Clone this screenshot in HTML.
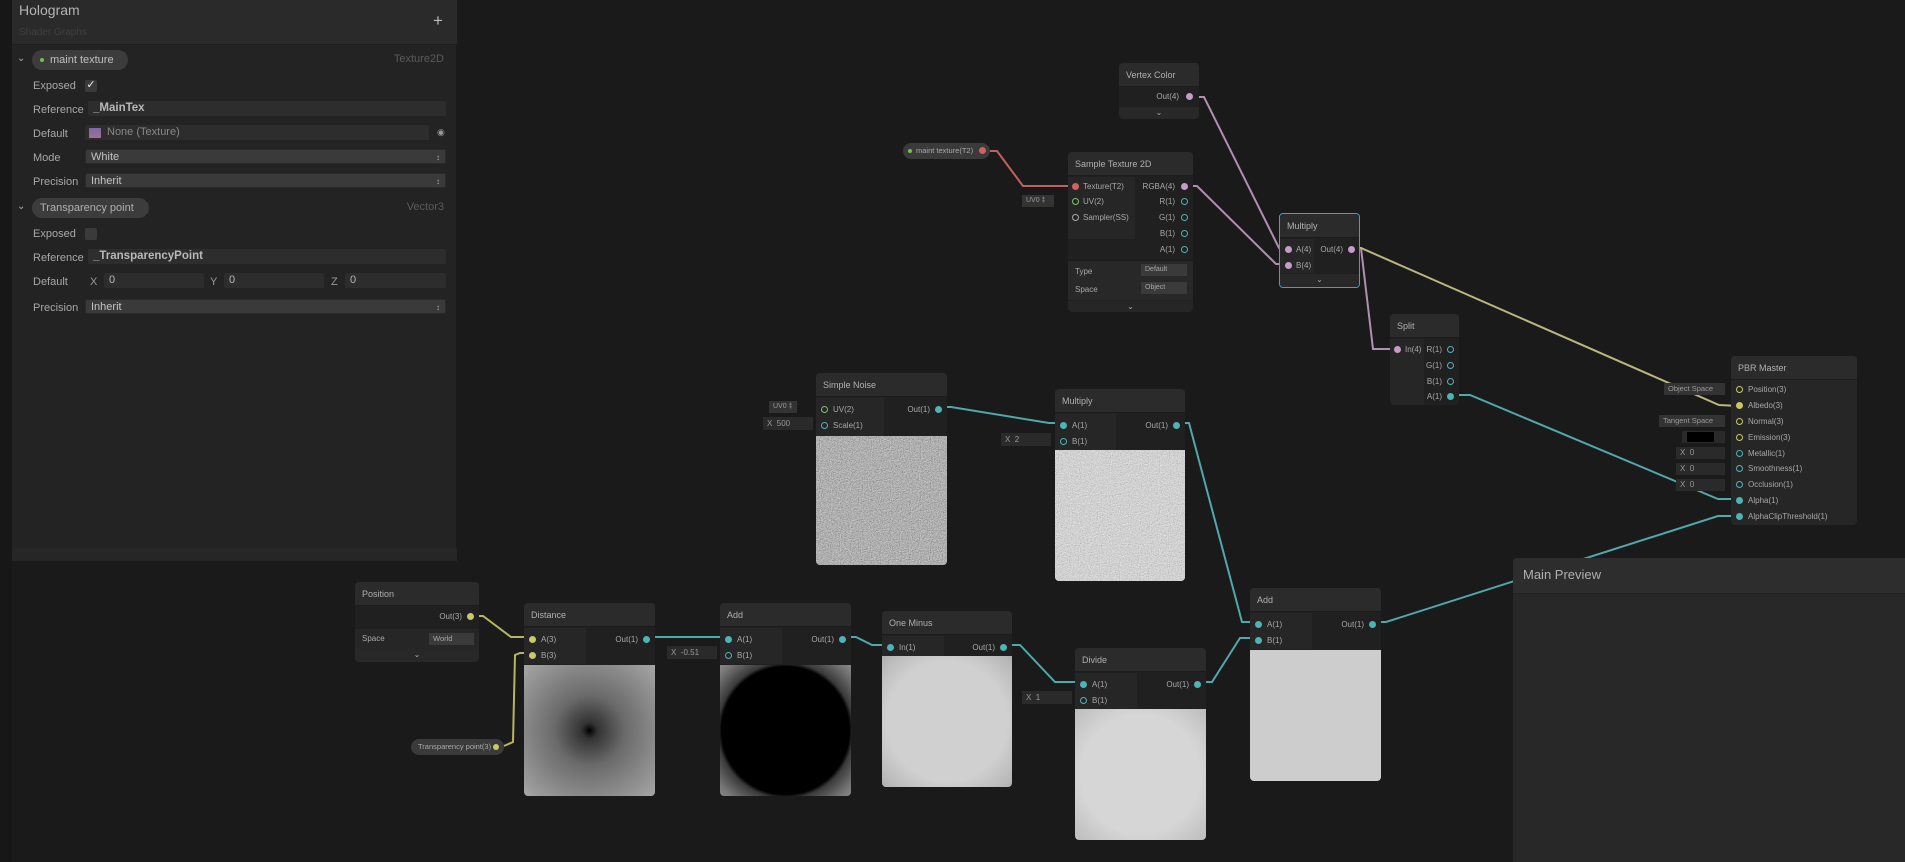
<!DOCTYPE html>
<html><head><meta charset="utf-8"><style>
*{box-sizing:border-box;margin:0;padding:0}
body{width:1905px;height:862px;background:#1a1a1a;overflow:hidden;position:relative;font-family:"Liberation Sans","DejaVu Sans",sans-serif;color:#b4b4b4}
.a{position:absolute}
.node{position:absolute;background:#202020;border-radius:4px;overflow:hidden;font-size:8px;color:#a8a8a8}
.hd{position:absolute;left:0;right:0;top:0;height:24px;background:#2b2b2b;border-bottom:1px solid #1c1c1c;font-size:9px;line-height:24px;padding-left:7px;color:#b0b0b0}
.inc{position:absolute;left:0;background:#262626}
.pl{position:absolute;white-space:nowrap;line-height:10px}
.dot{position:absolute;width:7px;height:7px;border-radius:50%;border:1.5px solid #4fb3b5}
.f{background:#4fb3b5}
.pv{position:absolute;left:0;right:0;bottom:0}
.fld{position:absolute;background:#2a2a2a;font-size:8px;color:#9a9a9a;line-height:14px;height:14px;padding-left:4px;white-space:nowrap}
.lp .row{position:absolute;left:21px;font-size:11px;color:#a8a8a8}
.inp{position:absolute;background:#2d2d2d;height:15px;border-radius:2px;font-size:11px;line-height:15px;padding-left:5px;color:#b8b8b8}
.sel{position:absolute;background:#3a3a3a;height:15px;border-radius:2px;font-size:11px;line-height:15px;padding-left:5px;color:#c4c4c4;border:1px solid #2a2a2a}
.sel:after{content:"\2195";position:absolute;right:5px;top:0;font-size:8px;color:#aaa}
</style></head><body>

<svg class="a" style="left:0;top:0" width="1905" height="862">
<defs><filter id="n" x="0" y="0" width="100%" height="100%"><feTurbulence type="fractalNoise" baseFrequency="0.9" numOctaves="2" seed="3"/><feColorMatrix type="saturate" values="0"/><feComponentTransfer><feFuncR type="linear" slope="1.5" intercept="-0.2"/><feFuncG type="linear" slope="1.5" intercept="-0.2"/><feFuncB type="linear" slope="1.5" intercept="-0.2"/><feFuncA type="linear" slope="0" intercept="1"/></feComponentTransfer></filter></defs>
<g fill="none" stroke-width="2">
<polyline stroke="#b08fb0" points="1192,97 1204,97 1279,248 1290,248"/>
<polyline stroke="#c4605c" points="990,151 997,151 1023,186 1075,186"/>
<polyline stroke="#b08fb0" points="1185,186 1197,186 1276,264 1290,264"/>
<polyline stroke="#b08fb0" points="1349,248 1361,248 1373,349 1397,349"/>
<polyline stroke="#b9b67e" points="1349,248 1361,248 1719,405 1739,406"/>
<polyline stroke="#4fa8aa" points="1452,395 1470,395 1718,499 1739,499"/>
<polyline stroke="#4fa8aa" points="939,407 951,407 1049,423 1062,423"/>
<polyline stroke="#4fa8aa" points="1177,423 1189,423 1242,622 1257,622"/>
<polyline stroke="#b5b660" points="471,616 483,616 511,637 531,637"/>
<polyline stroke="#b5b660" points="504,746 513,742 515,655 520,653 531,653"/>
<polyline stroke="#4fa8aa" points="648,637 728,637"/>
<polyline stroke="#4fa8aa" points="844,637 856,637 872,645 889,645"/>
<polyline stroke="#4fa8aa" points="1005,645 1020,645 1055,682 1083,682"/>
<polyline stroke="#4fa8aa" points="1199,682 1212,682 1240,638 1257,638"/>
<polyline stroke="#4fa8aa" points="1373,622 1386,622 1718,516 1739,516"/>
</g></svg>

<!-- Left panel -->
<div class="a" style="left:0;top:0;width:12px;height:862px;background:#171717"></div>
<div class="a lp" style="left:12px;top:0;width:445px;height:561px;background:#232323;border-right:1px solid #1a1a1a">
 <div class="a" style="left:0;top:0;width:445px;height:45px;background:#2a2a2a;border-bottom:1px solid #1e1e1e"></div>
 <div class="a" style="left:7px;top:2px;font-size:14px;color:#b4b4b4">Hologram</div>
 <div class="a" style="left:7px;top:27px;font-size:10px;color:#3f3f3f">Shader Graphs</div>
 <div class="a" style="left:421px;top:11px;font-size:17px;color:#bbb">+</div>
 <div class="a" style="left:5px;top:53px;font-size:10px;color:#aaa">&#8964;</div>
 <div class="a" style="left:20px;top:50px;width:96px;height:20px;border-radius:10px;background:#3c3c3c;font-size:11px;line-height:20px;padding-left:18px;color:#c0c0c0">maint texture<span class="a" style="left:8px;top:8px;width:4px;height:4px;border-radius:50%;background:#6ec24a"></span></div>
 <div class="a" style="right:12px;top:53px;font-size:11px;color:#5a5a5a">Texture2D</div>
 <div class="row" style="top:80px">Exposed</div>
 <div class="a" style="left:73px;top:80px;width:12px;height:12px;background:#3a3a3a;border-radius:2px;color:#eee;font-size:11px;line-height:11px;text-align:center">&#10003;</div>
 <div class="row" style="top:104px">Reference</div>
 <div class="inp" style="left:76px;top:101px;width:358px;font-weight:bold;font-size:11.5px">_MainTex</div>
 <div class="row" style="top:128px">Default</div>
 <div class="inp" style="left:73px;top:125px;width:344px;color:#888;padding-left:22px">None (Texture)<span class="a" style="left:4px;top:3px;width:12px;height:10px;background:linear-gradient(#7a6aa8,#a07090)"></span></div>
 <div class="a" style="left:425px;top:127px;font-size:9px;color:#999">&#9673;</div>
 <div class="row" style="top:152px">Mode</div>
 <div class="sel" style="left:73px;top:149px;width:361px">White</div>
 <div class="row" style="top:176px">Precision</div>
 <div class="sel" style="left:73px;top:173px;width:361px">Inherit</div>
 <div class="a" style="left:5px;top:201px;font-size:10px;color:#aaa">&#8964;</div>
 <div class="a" style="left:20px;top:198px;width:117px;height:20px;border-radius:10px;background:#3c3c3c;font-size:11px;line-height:20px;padding-left:8px;color:#b0b0b0">Transparency point</div>
 <div class="a" style="right:12px;top:201px;font-size:11px;color:#5a5a5a">Vector3</div>
 <div class="row" style="top:228px">Exposed</div>
 <div class="a" style="left:73px;top:228px;width:12px;height:12px;background:#3a3a3a;border-radius:2px"></div>
 <div class="row" style="top:252px">Reference</div>
 <div class="inp" style="left:76px;top:249px;width:358px;font-weight:bold;font-size:11.5px">_TransparencyPoint</div>
 <div class="row" style="top:276px">Default</div>
 <div class="a" style="left:78px;top:276px;font-size:11px;color:#999">X</div>
 <div class="inp" style="left:92px;top:273px;width:100px">0</div>
 <div class="a" style="left:198px;top:276px;font-size:11px;color:#999">Y</div>
 <div class="inp" style="left:212px;top:273px;width:100px">0</div>
 <div class="a" style="left:319px;top:276px;font-size:11px;color:#999">Z</div>
 <div class="inp" style="left:333px;top:273px;width:101px">0</div>
 <div class="row" style="top:302px">Precision</div>
 <div class="sel" style="left:73px;top:299px;width:361px">Inherit</div>
 <div class="a" style="left:0;top:548px;width:445px;height:13px;background:#262626"></div>
</div>

<!-- Vertex Color -->
<div class="node" style="left:1119px;top:63px;width:80px;height:56px">
 <div class="hd">Vertex Color</div>
 <div class="pl" style="right:20px;top:29px">Out(4)</div><div class="dot f" style="right:6px;top:30px;border-color:#c59cc5;background:#c59cc5"></div>
 <div class="a" style="left:0;right:0;top:44px;height:12px;background:#282828;text-align:center;font-size:8px;line-height:12px">&#8964;</div>
</div>

<!-- maint texture pill -->
<div class="a" style="left:903px;top:143px;width:87px;height:16px;border-radius:8px;background:#3a3a3a;font-size:7.5px;line-height:16px;padding-left:13px;color:#aaa;white-space:nowrap">maint texture(T2)<span class="a" style="left:5px;top:6px;width:4px;height:4px;border-radius:50%;background:#6ec24a"></span><span class="a" style="left:76px;top:4px;width:7px;height:7px;border-radius:50%;background:#d06060"></span></div>

<!-- Sample Texture 2D -->
<div class="node" style="left:1068px;top:152px;width:125px;height:160px">
 <div class="hd">Sample Texture 2D</div>
 <div class="inc" style="top:25px;width:67px;height:62px"></div>
 <div class="dot f" style="left:4px;top:31px;border-color:#d06060;background:#d06060"></div><div class="pl" style="left:15px;top:30px">Texture(T2)</div>
 <div class="dot" style="left:4px;top:46px;border-color:#7ec46a"></div><div class="pl" style="left:15px;top:45px">UV(2)</div>
 <div class="dot" style="left:4px;top:62px;border-color:#aaa"></div><div class="pl" style="left:15px;top:61px">Sampler(SS)</div>
 <div class="pl" style="right:18px;top:30px">RGBA(4)</div><div class="dot f" style="right:5px;top:31px;border-color:#c59cc5;background:#c59cc5"></div>
 <div class="pl" style="right:18px;top:45px">R(1)</div><div class="dot" style="right:5px;top:46px"></div>
 <div class="pl" style="right:18px;top:61px">G(1)</div><div class="dot" style="right:5px;top:62px"></div>
 <div class="pl" style="right:18px;top:77px">B(1)</div><div class="dot" style="right:5px;top:78px"></div>
 <div class="pl" style="right:18px;top:93px">A(1)</div><div class="dot" style="right:5px;top:94px"></div>
 <div class="a" style="left:0;right:0;top:108px;height:40px;background:#282828;border-top:1px solid #1c1c1c"></div>
 <div class="pl" style="left:7px;top:115px">Type</div><div class="a" style="left:73px;top:112px;width:46px;height:12px;background:#3a3a3a;font-size:7px;line-height:12px;padding-left:4px">Default</div>
 <div class="pl" style="left:7px;top:133px">Space</div><div class="a" style="left:73px;top:130px;width:46px;height:12px;background:#3a3a3a;font-size:7px;line-height:12px;padding-left:4px">Object</div>
 <div class="a" style="left:0;right:0;top:149px;height:11px;background:#262626;text-align:center;font-size:8px;line-height:11px">&#8964;</div>
</div>
<div class="fld" style="left:1022px;top:195px;width:32px;height:12px;line-height:12px;background:#333;font-size:7px">UV0 ‡</div>

<!-- Multiply selected -->
<div class="node" style="left:1279px;top:213px;width:81px;height:75px;border:1.5px solid #3d9ed8">
 <div class="hd">Multiply</div>
 <div class="inc" style="top:25px;width:34px;height:34px"></div>
 <div class="dot f" style="left:5px;top:32px;border-color:#c59cc5;background:#c59cc5"></div><div class="pl" style="left:16px;top:31px">A(4)</div>
 <div class="dot f" style="left:5px;top:48px;border-color:#c59cc5;background:#c59cc5"></div><div class="pl" style="left:16px;top:47px">B(4)</div>
 <div class="pl" style="right:16px;top:31px">Out(4)</div><div class="dot f" style="right:4px;top:32px;border-color:#c59cc5;background:#c59cc5"></div>
 <div class="a" style="left:0;right:0;top:60px;height:13px;background:#282828;text-align:center;font-size:8px;line-height:12px">&#8964;</div>
</div>

<!-- Split -->
<div class="node" style="left:1390px;top:314px;width:69px;height:91px">
 <div class="hd">Split</div>
 <div class="inc" style="top:25px;width:34px;height:66px"></div>
 <div class="dot f" style="left:4px;top:32px;border-color:#c59cc5;background:#c59cc5"></div><div class="pl" style="left:15px;top:31px">In(4)</div>
 <div class="pl" style="right:17px;top:31px">R(1)</div><div class="dot" style="right:5px;top:32px"></div>
 <div class="pl" style="right:17px;top:47px">G(1)</div><div class="dot" style="right:5px;top:48px"></div>
 <div class="pl" style="right:17px;top:63px">B(1)</div><div class="dot" style="right:5px;top:64px"></div>
 <div class="pl" style="right:17px;top:78px">A(1)</div><div class="dot f" style="right:5px;top:79px"></div>
</div>

<!-- PBR Master -->
<div class="node" style="left:1731px;top:356px;width:126px;height:169px;background:#262626">
 <div class="hd">PBR Master</div>
 <div class="dot" style="left:5px;top:30px;border-color:#c8c86a"></div><div class="pl" style="left:17px;top:29px">Position(3)</div>
 <div class="dot f" style="left:5px;top:46px;border-color:#c8c86a;background:#c8c86a"></div><div class="pl" style="left:17px;top:45px">Albedo(3)</div>
 <div class="dot" style="left:5px;top:62px;border-color:#c8c86a"></div><div class="pl" style="left:17px;top:61px">Normal(3)</div>
 <div class="dot" style="left:5px;top:78px;border-color:#c8c86a"></div><div class="pl" style="left:17px;top:77px">Emission(3)</div>
 <div class="dot" style="left:5px;top:94px"></div><div class="pl" style="left:17px;top:93px">Metallic(1)</div>
 <div class="dot" style="left:5px;top:109px"></div><div class="pl" style="left:17px;top:108px">Smoothness(1)</div>
 <div class="dot" style="left:5px;top:125px"></div><div class="pl" style="left:17px;top:124px">Occlusion(1)</div>
 <div class="dot f" style="left:5px;top:141px"></div><div class="pl" style="left:17px;top:140px">Alpha(1)</div>
 <div class="dot f" style="left:5px;top:157px"></div><div class="pl" style="left:17px;top:156px">AlphaClipThreshold(1)</div>
</div>
<div class="fld" style="left:1664px;top:383px;width:61px;height:12px;line-height:12px;font-size:7.5px;background:#333">Object Space</div>
<div class="fld" style="left:1659px;top:415px;width:66px;height:12px;line-height:12px;font-size:7.5px;background:#333">Tangent Space</div>
<div class="fld" style="left:1682px;top:431px;width:43px;height:12px"><span class="a" style="left:5px;top:1px;width:27px;height:10px;background:#000"></span></div>
<div class="fld" style="left:1676px;top:447px;width:49px;height:12px;line-height:12px">X&nbsp;&nbsp;0</div>
<div class="fld" style="left:1676px;top:463px;width:49px;height:12px;line-height:12px">X&nbsp;&nbsp;0</div>
<div class="fld" style="left:1676px;top:479px;width:49px;height:12px;line-height:12px">X&nbsp;&nbsp;0</div>

<!-- Simple Noise -->
<div class="node" style="left:816px;top:373px;width:131px;height:192px">
 <div class="hd">Simple Noise</div>
 <div class="inc" style="top:25px;width:68px;height:38px"></div>
 <div class="dot" style="left:5px;top:33px;border-color:#7ec46a"></div><div class="pl" style="left:17px;top:32px">UV(2)</div>
 <div class="dot" style="left:5px;top:49px"></div><div class="pl" style="left:17px;top:48px">Scale(1)</div>
 <div class="pl" style="right:17px;top:32px">Out(1)</div><div class="dot f" style="right:5px;top:33px"></div>
 <svg class="pv" style="top:63px" width="131" height="129"><rect width="131" height="129" fill="#888" filter="url(#n)"/><rect width="131" height="129" fill="#8a8a8a" opacity="0.35"/></svg>
</div>
<div class="fld" style="left:769px;top:401px;width:28px;height:12px;line-height:12px;font-size:7px;background:#333">UV0 ‡</div>
<div class="fld" style="left:763px;top:417px;width:50px;height:13px;line-height:13px">X&nbsp;&nbsp;500</div>

<!-- Multiply 2 -->
<div class="node" style="left:1055px;top:389px;width:130px;height:192px">
 <div class="hd">Multiply</div>
 <div class="inc" style="top:25px;width:61px;height:36px"></div>
 <div class="dot f" style="left:5px;top:33px"></div><div class="pl" style="left:17px;top:32px">A(1)</div>
 <div class="dot" style="left:5px;top:49px"></div><div class="pl" style="left:17px;top:48px">B(1)</div>
 <div class="pl" style="right:17px;top:32px">Out(1)</div><div class="dot f" style="right:5px;top:33px"></div>
 <svg class="pv" style="top:61px" width="130" height="131"><rect width="130" height="131" fill="#bbb" filter="url(#n)"/><rect width="130" height="131" fill="#ddd" opacity="0.55"/></svg>
</div>
<div class="fld" style="left:1001px;top:433px;width:50px;height:13px;line-height:13px">X&nbsp;&nbsp;2</div>

<!-- Position -->
<div class="node" style="left:355px;top:582px;width:124px;height:80px">
 <div class="hd">Position</div>
 <div class="pl" style="right:17px;top:30px">Out(3)</div><div class="dot f" style="right:5px;top:31px;border-color:#c8c86a;background:#c8c86a"></div>
 <div class="a" style="left:0;right:0;top:47px;height:20px;background:#262626"></div>
 <div class="pl" style="left:7px;top:52px">Space</div><div class="a" style="left:74px;top:51px;width:45px;height:12px;background:#3a3a3a;font-size:7.5px;line-height:12px;padding-left:4px">World</div>
 <div class="a" style="left:0;right:0;top:67px;height:13px;background:#282828;text-align:center;font-size:8px;line-height:12px">&#8964;</div>
</div>

<!-- Transparency point pill -->
<div class="a" style="left:411px;top:739px;width:93px;height:16px;border-radius:8px;background:#3a3a3a;font-size:7.5px;line-height:16px;padding-left:7px;color:#aaa;white-space:nowrap">Transparency point(3)<span class="a" style="left:82px;top:5px;width:6px;height:6px;border-radius:50%;background:#c8c86a"></span></div>

<!-- Distance -->
<div class="node" style="left:524px;top:603px;width:131px;height:193px">
 <div class="hd">Distance</div>
 <div class="inc" style="top:25px;width:62px;height:36px"></div>
 <div class="dot f" style="left:5px;top:33px;border-color:#c8c86a;background:#c8c86a"></div><div class="pl" style="left:17px;top:32px">A(3)</div>
 <div class="dot f" style="left:5px;top:49px;border-color:#c8c86a;background:#c8c86a"></div><div class="pl" style="left:17px;top:48px">B(3)</div>
 <div class="pl" style="right:17px;top:32px">Out(1)</div><div class="dot f" style="right:5px;top:33px"></div>
 <div class="pv" style="top:62px;background:radial-gradient(circle at 50% 50%,#000 0,#333 8px,#6a6a6a 35px,#999 80px,#b0b0b0 100px)"></div>
</div>

<!-- Add 1 -->
<div class="node" style="left:720px;top:603px;width:131px;height:193px">
 <div class="hd">Add</div>
 <div class="inc" style="top:25px;width:62px;height:36px"></div>
 <div class="dot f" style="left:5px;top:33px"></div><div class="pl" style="left:17px;top:32px">A(1)</div>
 <div class="dot" style="left:5px;top:49px"></div><div class="pl" style="left:17px;top:48px">B(1)</div>
 <div class="pl" style="right:17px;top:32px">Out(1)</div><div class="dot f" style="right:5px;top:33px"></div>
 <div class="pv" style="top:62px;background:radial-gradient(circle at 50% 50%,#000 0,#000 64px,#3a3a3a 68px,#777 85px,#999 100px)"></div>
</div>
<div class="fld" style="left:667px;top:646px;width:50px;height:13px;line-height:13px">X&nbsp;&nbsp;-0.51</div>

<!-- One Minus -->
<div class="node" style="left:882px;top:611px;width:130px;height:176px">
 <div class="hd">One Minus</div>
 <div class="inc" style="top:25px;width:62px;height:20px"></div>
 <div class="dot f" style="left:5px;top:33px"></div><div class="pl" style="left:17px;top:32px">In(1)</div>
 <div class="pl" style="right:17px;top:32px">Out(1)</div><div class="dot f" style="right:5px;top:33px"></div>
 <div class="pv" style="top:45px;background:radial-gradient(circle at 50% 50%,#d0d0d0 0,#d0d0d0 60px,#bdbdbd 80px,#a8a8a8 100px)"></div>
</div>

<!-- Divide -->
<div class="node" style="left:1075px;top:648px;width:131px;height:192px">
 <div class="hd">Divide</div>
 <div class="inc" style="top:25px;width:62px;height:36px"></div>
 <div class="dot f" style="left:5px;top:33px"></div><div class="pl" style="left:17px;top:32px">A(1)</div>
 <div class="dot" style="left:5px;top:49px"></div><div class="pl" style="left:17px;top:48px">B(1)</div>
 <div class="pl" style="right:17px;top:32px">Out(1)</div><div class="dot f" style="right:5px;top:33px"></div>
 <div class="pv" style="top:61px;background:radial-gradient(circle at 50% 50%,#d6d6d6 0,#d6d6d6 60px,#c6c6c6 80px,#b8b8b8 100px)"></div>
</div>
<div class="fld" style="left:1022px;top:691px;width:50px;height:13px;line-height:13px">X&nbsp;&nbsp;1</div>

<!-- Add 2 -->
<div class="node" style="left:1250px;top:588px;width:131px;height:193px">
 <div class="hd">Add</div>
 <div class="inc" style="top:25px;width:62px;height:36px"></div>
 <div class="dot f" style="left:5px;top:33px"></div><div class="pl" style="left:17px;top:32px">A(1)</div>
 <div class="dot f" style="left:5px;top:49px"></div><div class="pl" style="left:17px;top:48px">B(1)</div>
 <div class="pl" style="right:17px;top:32px">Out(1)</div><div class="dot f" style="right:5px;top:33px"></div>
 <div class="pv" style="top:62px;background:#cdcdcd"></div>
</div>

<!-- Main Preview -->
<div class="a" style="left:1513px;top:558px;width:392px;height:304px;background:#282828;border-radius:4px 0 0 0">
 <div class="a" style="left:0;top:0;width:392px;height:36px;background:#2d2d2d;border-bottom:1px solid #222;border-radius:4px 0 0 0"></div>
 <div class="a" style="left:10px;top:9px;font-size:13px;color:#b0b0b0">Main Preview</div>
</div>
</body></html>
